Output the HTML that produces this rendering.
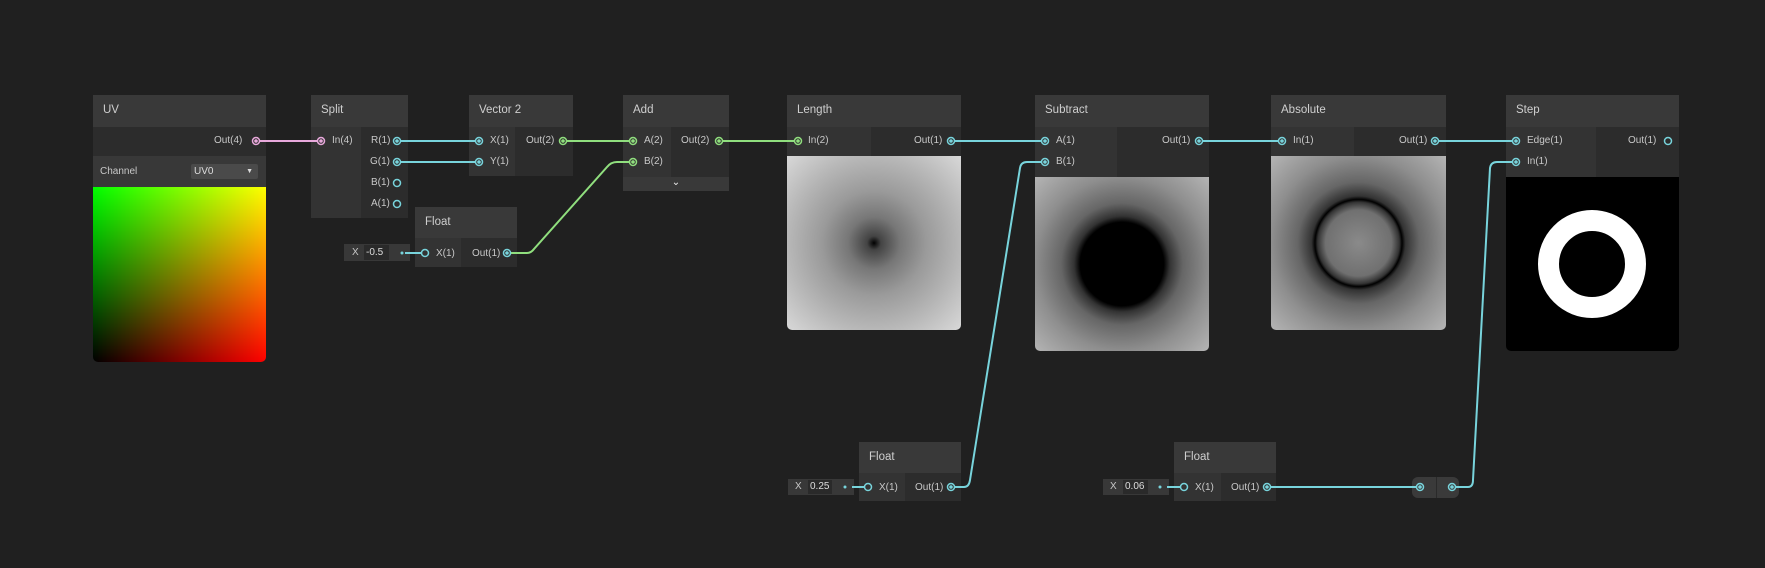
<!DOCTYPE html>
<html><head><meta charset="utf-8"><style>
body{margin:0;width:1765px;height:568px;background:#202020;overflow:hidden;position:relative;font-family:"Liberation Sans",sans-serif;font-size:10px;color:#c8c8c8}
.a{position:absolute;box-sizing:border-box}
.hd{background:#393939;color:#cfcfcf;font-size:11.5px;padding-left:10px;line-height:31px}
.in{background:#333}
.out{background:#2c2c2c}
.t{position:absolute;white-space:nowrap;line-height:12px}
.img{border-radius:0 0 5px 5px}
</style></head><body>

<!-- UV -->
<div class="a hd" style="left:93px;top:95px;width:173px;height:32px">UV</div>
<div class="a out" style="left:93px;top:127px;width:173px;height:29px"></div>
<div class="t" style="left:214px;top:135px">Out(4)</div>
<div class="a" style="left:93px;top:156px;width:173px;height:31px;background:#383838"></div>
<div class="t" style="left:100px;top:166px">Channel</div>
<div class="a" style="left:191px;top:164px;width:67px;height:15px;background:#4a4a4a;border-radius:2px;color:#ddd;padding-left:3px;line-height:15px">UV0<span style="position:absolute;right:5px;top:0;font-size:7px">▼</span></div>
<div class="a img" style="left:93px;top:187px;width:173px;height:175px;background:linear-gradient(to right,#000,#f00);overflow:hidden">
<div style="position:absolute;inset:0;background:linear-gradient(to top,#000,#0f0);mix-blend-mode:screen"></div></div>

<!-- Split -->
<div class="a hd" style="left:311px;top:95px;width:97px;height:32px">Split</div>
<div class="a in" style="left:311px;top:127px;width:50px;height:91px"></div>
<div class="a out" style="left:361px;top:127px;width:47px;height:91px"></div>
<div class="t" style="left:332px;top:135px">In(4)</div>
<div class="t" style="left:371px;top:135px">R(1)</div>
<div class="t" style="left:370px;top:156px">G(1)</div>
<div class="t" style="left:371px;top:177px">B(1)</div>
<div class="t" style="left:371px;top:198px">A(1)</div>

<!-- Vector2 -->
<div class="a hd" style="left:469px;top:95px;width:104px;height:32px">Vector 2</div>
<div class="a in" style="left:469px;top:127px;width:46px;height:49px"></div>
<div class="a out" style="left:515px;top:127px;width:58px;height:49px"></div>
<div class="t" style="left:490px;top:135px">X(1)</div>
<div class="t" style="left:490px;top:156px">Y(1)</div>
<div class="t" style="left:526px;top:135px">Out(2)</div>

<!-- Float1 -->
<div class="a" style="left:344px;top:244px;width:66px;height:17px;background:#383838"></div>
<div class="t" style="left:352px;top:247px">X</div>
<div class="a" style="left:364px;top:245px;width:25px;height:15px;background:#2a2a2a;color:#ddd;line-height:15px;padding-left:2px">-0.5</div>
<div class="a hd" style="left:415px;top:207px;width:102px;height:31px">Float</div>
<div class="a in" style="left:415px;top:238px;width:46px;height:29px"></div>
<div class="a out" style="left:461px;top:238px;width:56px;height:29px"></div>
<div class="t" style="left:436px;top:248px">X(1)</div>
<div class="t" style="left:472px;top:248px">Out(1)</div>

<!-- Add -->
<div class="a hd" style="left:623px;top:95px;width:106px;height:32px">Add</div>
<div class="a in" style="left:623px;top:127px;width:48px;height:50px"></div>
<div class="a out" style="left:671px;top:127px;width:58px;height:50px"></div>
<div class="a" style="left:623px;top:177px;width:106px;height:14px;background:#393939;text-align:center;line-height:12px;font-size:10px;color:#eee">⌄</div>
<div class="t" style="left:644px;top:135px">A(2)</div>
<div class="t" style="left:644px;top:156px">B(2)</div>
<div class="t" style="left:681px;top:135px">Out(2)</div>

<!-- Length -->
<div class="a hd" style="left:787px;top:95px;width:174px;height:32px">Length</div>
<div class="a in" style="left:787px;top:127px;width:84px;height:29px"></div>
<div class="a out" style="left:871px;top:127px;width:90px;height:29px"></div>
<div class="t" style="left:808px;top:135px">In(2)</div>
<div class="t" style="left:914px;top:135px">Out(1)</div>
<div class="a img" style="left:787px;top:156px;width:174px;height:174px;background:radial-gradient(circle closest-side at 50% 50%,#000 0,#444 8%,#777 30%,#9a9a9a 60%,#b8b8b8 100%,#d8d8d8 141%)"></div>

<!-- Subtract -->
<div class="a hd" style="left:1035px;top:95px;width:174px;height:32px">Subtract</div>
<div class="a in" style="left:1035px;top:127px;width:82px;height:50px"></div>
<div class="a out" style="left:1117px;top:127px;width:92px;height:50px"></div>
<div class="t" style="left:1056px;top:135px">A(1)</div>
<div class="t" style="left:1056px;top:156px">B(1)</div>
<div class="t" style="left:1162px;top:135px">Out(1)</div>
<div class="a img" style="left:1035px;top:177px;width:174px;height:174px;background:radial-gradient(circle closest-side at 50% 50%,#000 48%,#333 55%,#666 70%,#8e8e8e 100%,#b4b4b4 141%)"></div>

<!-- Absolute -->
<div class="a hd" style="left:1271px;top:95px;width:175px;height:32px">Absolute</div>
<div class="a in" style="left:1271px;top:127px;width:83px;height:29px"></div>
<div class="a out" style="left:1354px;top:127px;width:92px;height:29px"></div>
<div class="t" style="left:1293px;top:135px">In(1)</div>
<div class="t" style="left:1399px;top:135px">Out(1)</div>
<div class="a img" style="left:1271px;top:156px;width:175px;height:174px;background:radial-gradient(circle closest-side at 50% 50%,#8a8a8a 0,#707070 38%,#333 47%,#000 50%,#333 54%,#666 70%,#8e8e8e 100%,#b4b4b4 141%)"></div>

<!-- Step -->
<div class="a hd" style="left:1506px;top:95px;width:173px;height:32px">Step</div>
<div class="a in" style="left:1506px;top:127px;width:90px;height:50px"></div>
<div class="a out" style="left:1596px;top:127px;width:83px;height:50px"></div>
<div class="t" style="left:1527px;top:135px">Edge(1)</div>
<div class="t" style="left:1527px;top:156px">In(1)</div>
<div class="t" style="left:1628px;top:135px">Out(1)</div>
<div class="a img" style="left:1506px;top:177px;width:173px;height:174px;background:#000"></div>
<div class="a" style="left:1538px;top:210px;width:108px;height:108px;border-radius:50%;border:21px solid #fff"></div>

<!-- Float2 -->
<div class="a" style="left:788px;top:479px;width:66px;height:16px;background:#383838"></div>
<div class="t" style="left:795px;top:481px">X</div>
<div class="a" style="left:808px;top:480px;width:24px;height:14px;background:#2a2a2a;color:#ddd;line-height:14px;padding-left:2px">0.25</div>
<div class="a hd" style="left:859px;top:442px;width:102px;height:31px">Float</div>
<div class="a in" style="left:859px;top:473px;width:46px;height:28px"></div>
<div class="a out" style="left:905px;top:473px;width:56px;height:28px"></div>
<div class="t" style="left:879px;top:482px">X(1)</div>
<div class="t" style="left:915px;top:482px">Out(1)</div>

<!-- Float3 -->
<div class="a" style="left:1103px;top:479px;width:66px;height:16px;background:#383838"></div>
<div class="t" style="left:1110px;top:481px">X</div>
<div class="a" style="left:1123px;top:480px;width:25px;height:14px;background:#2a2a2a;color:#ddd;line-height:14px;padding-left:2px">0.06</div>
<div class="a hd" style="left:1174px;top:442px;width:102px;height:31px">Float</div>
<div class="a in" style="left:1174px;top:473px;width:47px;height:28px"></div>
<div class="a out" style="left:1221px;top:473px;width:55px;height:28px"></div>
<div class="t" style="left:1195px;top:482px">X(1)</div>
<div class="t" style="left:1231px;top:482px">Out(1)</div>

<!-- reroute -->
<div class="a" style="left:1412px;top:477px;width:47px;height:21px;background:#3a3a3a;border-radius:6px"></div>
<div class="a" style="left:1436px;top:477px;width:1px;height:21px;background:#2a2a2a"></div>

<svg class="a" style="left:0;top:0" width="1765" height="568">
<g fill="none" stroke-width="2">
<path d="M260 141H317" stroke="#e9a9dc"/>
<path d="M401 141H475M401 162H475" stroke="#78d4dc"/>
<path d="M567 141H629" stroke="#90df7e"/>
<path d="M723 141H794" stroke="#90df7e"/>
<path d="M511 253H527Q531 253 534 249L607 167Q611 162 617 162H629" stroke="#90df7e"/>
<path d="M955 141H1041M1203 141H1278M1439 141H1512" stroke="#78d4dc"/>
<path d="M955 487H964Q969 487 970 480L1020 168Q1021 162 1027 162H1041" stroke="#78d4dc"/>
<path d="M1271 487H1416M1456 487H1468Q1473 487 1473 480L1490 168Q1491 162 1497 162H1512" stroke="#78d4dc"/>
<path d="M405 253H421M852 487H864M1167 487H1180" stroke="#78d4dc"/>
</g>
<g fill="none" stroke-width="1.5">
<circle cx="256" cy="141" r="3.5" stroke="#e9a9dc"/><circle cx="321" cy="141" r="3.5" stroke="#e9a9dc"/>
<circle cx="397" cy="141" r="3.5" stroke="#78d4dc"/><circle cx="397" cy="162" r="3.5" stroke="#78d4dc"/>
<circle cx="397" cy="183" r="3.5" stroke="#78d4dc"/><circle cx="397" cy="204" r="3.5" stroke="#78d4dc"/>
<circle cx="479" cy="141" r="3.5" stroke="#78d4dc"/><circle cx="479" cy="162" r="3.5" stroke="#78d4dc"/>
<circle cx="563" cy="141" r="3.5" stroke="#90df7e"/>
<circle cx="633" cy="141" r="3.5" stroke="#90df7e"/><circle cx="633" cy="162" r="3.5" stroke="#90df7e"/><circle cx="719" cy="141" r="3.5" stroke="#90df7e"/>
<circle cx="798" cy="141" r="3.5" stroke="#90df7e"/><circle cx="951" cy="141" r="3.5" stroke="#78d4dc"/>
<circle cx="425" cy="253" r="3.5" stroke="#78d4dc"/><circle cx="507" cy="253" r="3.5" stroke="#78d4dc"/>
<circle cx="1045" cy="141" r="3.5" stroke="#78d4dc"/><circle cx="1045" cy="162" r="3.5" stroke="#78d4dc"/><circle cx="1199" cy="141" r="3.5" stroke="#78d4dc"/>
<circle cx="1282" cy="141" r="3.5" stroke="#78d4dc"/><circle cx="1435" cy="141" r="3.5" stroke="#78d4dc"/>
<circle cx="1516" cy="141" r="3.5" stroke="#78d4dc"/><circle cx="1516" cy="162" r="3.5" stroke="#78d4dc"/><circle cx="1668" cy="141" r="3.5" stroke="#78d4dc"/>
<circle cx="868" cy="487" r="3.5" stroke="#78d4dc"/><circle cx="951" cy="487" r="3.5" stroke="#78d4dc"/>
<circle cx="1184" cy="487" r="3.5" stroke="#78d4dc"/><circle cx="1267" cy="487" r="3.5" stroke="#78d4dc"/>
<circle cx="1420" cy="487" r="3.5" stroke="#78d4dc"/><circle cx="1452" cy="487" r="3.5" stroke="#78d4dc"/>
</g>
<g fill="#78d4dc">
<circle cx="397" cy="141" r="1.8"/><circle cx="397" cy="162" r="1.8"/><circle cx="479" cy="141" r="1.8"/><circle cx="479" cy="162" r="1.8"/>
<circle cx="951" cy="141" r="1.8"/><circle cx="507" cy="253" r="1.8"/><circle cx="1045" cy="141" r="1.8"/><circle cx="1045" cy="162" r="1.8"/><circle cx="1199" cy="141" r="1.8"/>
<circle cx="1282" cy="141" r="1.8"/><circle cx="1435" cy="141" r="1.8"/><circle cx="1516" cy="141" r="1.8"/><circle cx="1516" cy="162" r="1.8"/>
<circle cx="951" cy="487" r="1.8"/><circle cx="1267" cy="487" r="1.8"/><circle cx="1420" cy="487" r="1.8"/><circle cx="1452" cy="487" r="1.8"/>
<circle cx="402" cy="253" r="1.5"/><circle cx="845" cy="487" r="1.5"/><circle cx="1160" cy="487" r="1.5"/>
</g>
<g fill="#e9a9dc"><circle cx="256" cy="141" r="1.8"/><circle cx="321" cy="141" r="1.8"/></g>
<g fill="#90df7e"><circle cx="563" cy="141" r="1.8"/><circle cx="633" cy="141" r="1.8"/><circle cx="633" cy="162" r="1.8"/><circle cx="719" cy="141" r="1.8"/><circle cx="798" cy="141" r="1.8"/></g>
</svg>
</body></html>
